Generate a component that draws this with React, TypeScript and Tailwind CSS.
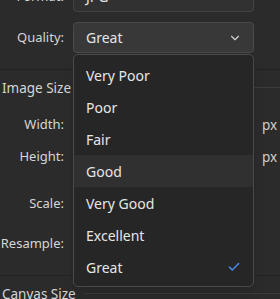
import { Check, ChevronDown } from "lucide-react";

const font = { fontFamily: '"Noto Sans", "Open Sans", sans-serif' };

const qualities = ["Very Poor", "Poor", "Fair", "Good", "Very Good", "Excellent", "Great"];

function Label({ children }: { children: string }) {
  return (
    <div className="w-[64px] shrink-0 flex justify-end whitespace-nowrap text-[13px] text-[#d6d6d6]">
      {children}
    </div>
  );
}

function SectionHeader({ title }: { title: string }) {
  return (
    <div className="flex items-center gap-[8px] pl-[2px] h-[20px]">
      <span className="text-[13.5px] text-[#d6d6d6] whitespace-nowrap">{title}</span>
      <div className="flex-1 h-px bg-[#3b3b3b] -mt-[2px]" />
    </div>
  );
}

function FieldRow({ label, height, unit }: { label: string; height: string; unit?: string }) {
  return (
    <div className={`flex items-center ${height}`}>
      <Label>{label}</Label>
      <div className="ml-[9px] w-[181px] h-[28px] rounded-[4px] border border-[#444] bg-[#313131]" />
      {unit && <span className="ml-[8px] text-[13.5px] text-[#cfcfcf]">{unit}</span>}
    </div>
  );
}

export default function App() {
  const selected = "Great";
  const hovered = "Good";

  return (
    <div className="relative w-[280px] h-[299px] overflow-hidden bg-[#2b2b2b]" style={font}>
      <div className="-mt-[19px]">
        <div className="flex items-center h-[31px]">
          <Label>Format:</Label>
          <div className="ml-[9px] w-[181px] h-[31px] rounded-[4px] border border-[#434343] bg-[#313131] flex items-center px-[12px] text-[14px] text-[#e4e4e4]">
            JPG
          </div>
        </div>

        <div className="flex items-center h-[31px] mt-[10px]">
          <Label>Quality:</Label>
          <div className="ml-[9px] w-[181px] h-[31px] rounded-[4px] border border-[#4a4a4a] bg-[#383838] flex items-center justify-between pl-[12px] pr-[11px] text-[14px] text-[#e6e6e6]">
            <span className="-mt-[1px]">{selected}</span>
            <ChevronDown size={14} strokeWidth={2} className="text-[#d0d0d0]" />
          </div>
        </div>

        <div className="mt-[16px] border-t border-[#232323]" />

        <div className="mt-[8px]">
          <SectionHeader title="Image Size" />
        </div>

        <div className="mt-[11px]">
          <FieldRow label="Width:" height="h-[32px]" unit="px" />
          <FieldRow label="Height:" height="h-[32px]" unit="px" />
          <div className="mt-[8px]">
            <FieldRow label="Scale:" height="h-[46px]" />
          </div>
          <FieldRow label="Resample:" height="h-[34px]" />
        </div>

        <div className="mt-[14px] border-t border-[#232323]" />

        <div className="mt-[8px]">
          <SectionHeader title="Canvas Size" />
        </div>
      </div>

      <div className="absolute left-[73px] top-[54px] w-[181px] h-[233px] rounded-[5px] border border-[#4a4a4a] bg-[#262626] py-[4px] shadow-lg">
        {qualities.map((q) => (
          <div
            key={q}
            className={`flex items-center justify-between h-[32px] pl-[12px] pr-[12px] text-[14px] text-[#e6e6e6] ${
              q === hovered ? "bg-[#303030]" : ""
            }`}
          >
            <span>{q}</span>
            {q === selected && <Check size={14} strokeWidth={2.5} className="text-[#4a8cf0]" />}
          </div>
        ))}
      </div>
    </div>
  );
}
